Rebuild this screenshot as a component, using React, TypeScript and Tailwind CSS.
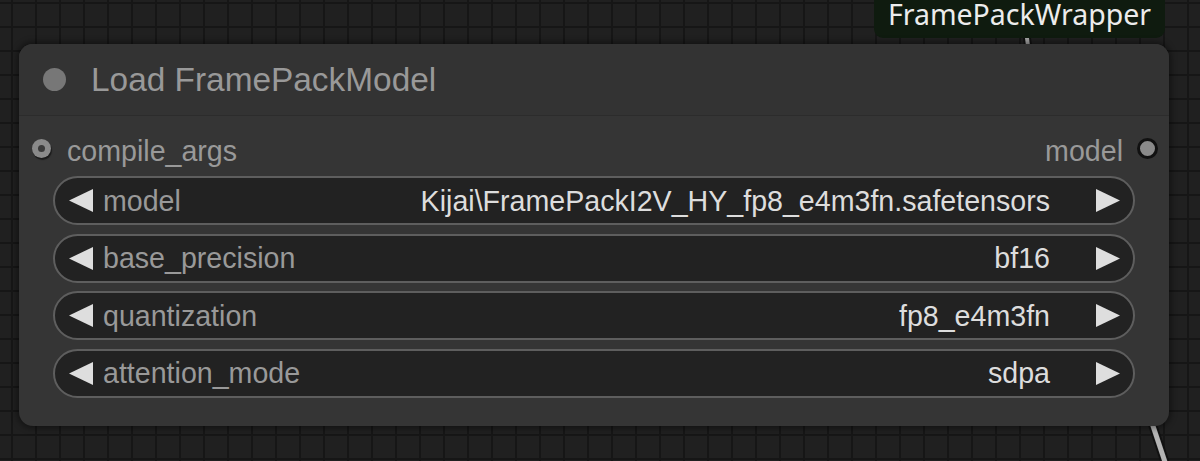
const widgets = [
  { label: 'model', value: 'Kijai\\FramePackI2V_HY_fp8_e4m3fn.safetensors' },
  { label: 'base_precision', value: 'bf16' },
  { label: 'quantization', value: 'fp8_e4m3fn' },
  { label: 'attention_mode', value: 'sdpa' },
]

function Arrow({ dir }: { dir: 'left' | 'right' }) {
  return (
    <svg width="24" height="23" viewBox="0 0 24 23" className="shrink-0">
      {dir === 'left' ? (
        <polygon points="24,0 24,23 0,11.5" fill="#dedede" />
      ) : (
        <polygon points="0,0 0,23 24,11.5" fill="#dedede" />
      )}
    </svg>
  )
}

function ComboWidget({ label, value }: { label: string; value: string }) {
  return (
    <div className="flex h-[49px] items-center rounded-full border-2 border-[#5e5e5e] bg-[#222222] pl-[14px] pr-[13px]">
      <Arrow dir="left" />
      <span className="ml-[10px] text-[28.6px] leading-[32px] text-[#999999]">{label}</span>
      <span className="ml-auto mr-[46px] text-[28.6px] leading-[32px] text-[#dddddd]">{value}</span>
      <Arrow dir="right" />
    </div>
  )
}

export default function App() {
  return (
    <div className="relative h-[461px] w-full overflow-hidden bg-[#202020] bg-[linear-gradient(to_right,#161616_2px,transparent_2px),linear-gradient(to_bottom,#161616_2px,transparent_2px)] bg-[size:24px_24px] bg-[position:11px_2px] font-['Liberation_Sans',Arial,sans-serif]">
      {/* links */}
      <svg className="absolute left-0 top-0" width="1200" height="461">
        <line x1="1026" y1="30" x2="1028" y2="46" stroke="#111" strokeWidth="8" />
        <line x1="1026" y1="30" x2="1028" y2="46" stroke="#a8a8a8" strokeWidth="4" />
        <line x1="1151" y1="420" x2="1166" y2="465" stroke="#111" strokeWidth="9" />
        <line x1="1151" y1="420" x2="1166" y2="465" stroke="#b4b4b4" strokeWidth="5" />
      </svg>

      {/* wrapper group label */}
      <div className="absolute left-[874px] top-[-10px] flex h-[48px] w-[291px] items-end justify-center rounded-[9px] bg-[#0f1b0f] pb-[5px]">
        <span className="font-['Noto_Sans',sans-serif] text-[28.5px] leading-[38px] text-[#ececec]">
          FramePackWrapper
        </span>
      </div>

      {/* node */}
      <div className="absolute left-[19px] top-[44px] flex h-[382px] w-[1150px] flex-col overflow-hidden rounded-[14px] bg-[#353535] shadow-[0_0_6px_2px_rgba(0,0,0,0.45)]">
        <div className="flex h-[72px] shrink-0 items-center border-b border-[#2c2c2c] bg-[#333333] pl-[24px]">
          <div className="h-[23px] w-[23px] rounded-full bg-[#777777]" />
          <span className="ml-[25px] text-[33.4px] leading-[37px] text-[#999999]">Load FramePackModel</span>
        </div>

        <div className="flex flex-col px-[34px] pt-[19px]">
          <div className="-mx-[34px] flex h-[32px] items-center">
            <div className="ml-[13px] flex h-[19px] w-[19px] -translate-y-[3px] items-center justify-center rounded-full bg-[#8a8a8a] shadow-[1px_2px_1px_rgba(0,0,0,0.5)]">
              <div className="h-[7px] w-[7px] rounded-full bg-[#3a3a3a]" />
            </div>
            <span className="ml-[16px] text-[28.6px] leading-[32px] text-[#999999]">compile_args</span>
            <span className="ml-auto text-[28.6px] leading-[32px] text-[#999999]">model</span>
            <div className="ml-[14px] mr-[11px] h-[21px] w-[21px] -translate-y-[3px] rounded-full border-[3px] border-[#111111] bg-[#8a8a8a]" />
          </div>

          <div className="mt-[9px] flex flex-col gap-[8.5px]">
            {widgets.map((w) => (
              <ComboWidget key={w.label} label={w.label} value={w.value} />
            ))}
          </div>
        </div>
      </div>
    </div>
  )
}
